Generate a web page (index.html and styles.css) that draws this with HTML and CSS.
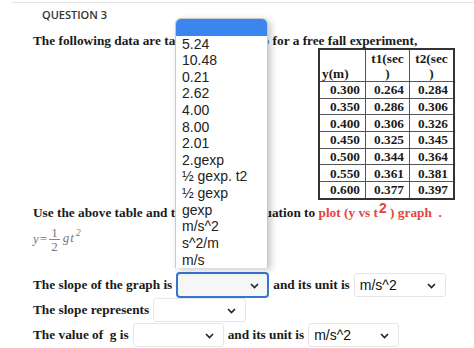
FILE: index.html
```html
<!DOCTYPE html>
<html lang="en">
<head>
	<meta charset="UTF-8">
	<title>Question 3</title>
	<link rel="stylesheet" href="styles.css">
</head>
<body>
	<div class="page">
		<div class="rule"></div>
		<div class="qtitle">QUESTION 3</div>
		<div class="qbody">
			<p class="lead">The following data are taken from the lab for a free fall experiment,</p>
			<table class="data">
				<tr class="head">
					<td class="ym">y(m)</td>
					<td>t1(sec<br>)</td>
					<td>t2(sec<br>)</td>
				</tr>
				<tr><td>0.300</td><td>0.264</td><td>0.284</td></tr>
				<tr><td>0.350</td><td>0.286</td><td>0.306</td></tr>
				<tr><td>0.400</td><td>0.306</td><td>0.326</td></tr>
				<tr><td>0.450</td><td>0.325</td><td>0.345</td></tr>
				<tr><td>0.500</td><td>0.344</td><td>0.364</td></tr>
				<tr><td>0.550</td><td>0.361</td><td>0.381</td></tr>
				<tr><td>0.600</td><td>0.377</td><td>0.397</td></tr>
			</table>
			<p class="use">Use the above table and the kinematic equation to <span class="red">plot (y vs t<span class="sq">2</span> ) graph &nbsp;.</span></p>
			<div class="formula">
				<span>y</span><span class="eq">=</span>
				<span class="frac"><span class="num">1</span><span class="den">2</span></span>
				<span class="g">gt<sup>2</sup></span>
			</div>

			<div class="row">
				<span>The slope of the graph is</span>
				<div class="sel focus w93"><span class="val"></span>
					<svg class="chev" width="9" height="6" viewBox="0 0 9 6"><path d="M1 1l3.5 3.5L8 1" fill="none" stroke="#222" stroke-width="1.6"/></svg>
				</div>
				<span>and its unit is</span>
				<div class="sel w92"><span class="val">m/s^2</span>
					<svg class="chev" width="9" height="6" viewBox="0 0 9 6"><path d="M1 1l3.5 3.5L8 1" fill="none" stroke="#222" stroke-width="1.6"/></svg>
				</div>
			</div>
			<div class="row">
				<span>The slope represents</span>
				<div class="sel w93"><span class="val"></span>
					<svg class="chev" width="9" height="6" viewBox="0 0 9 6"><path d="M1 1l3.5 3.5L8 1" fill="none" stroke="#222" stroke-width="1.6"/></svg>
				</div>
			</div>
			<div class="row">
				<span>The value of &nbsp;g is</span>
				<div class="sel w91"><span class="val"></span>
					<svg class="chev" width="9" height="6" viewBox="0 0 9 6"><path d="M1 1l3.5 3.5L8 1" fill="none" stroke="#222" stroke-width="1.6"/></svg>
				</div>
				<span>and its unit is</span>
				<div class="sel w91"><span class="val">m/s^2</span>
					<svg class="chev" width="9" height="6" viewBox="0 0 9 6"><path d="M1 1l3.5 3.5L8 1" fill="none" stroke="#222" stroke-width="1.6"/></svg>
				</div>
			</div>
		</div>

		<!-- open list of the first select -->
		<ul class="popup">
			<li class="active"></li>
			<li>5.24</li>
			<li>10.48</li>
			<li>0.21</li>
			<li>2.62</li>
			<li>4.00</li>
			<li>8.00</li>
			<li>2.01</li>
			<li>2.gexp</li>
			<li>½ gexp. t2</li>
			<li>½ gexp</li>
			<li>gexp</li>
			<li>m/s^2</li>
			<li>s^2/m</li>
			<li>m/s</li>
		</ul>
	</div>
</body>
</html>
```

FILE: styles.css
```css
*{
	margin: 0;
	padding: 0;
	list-style-type: none;
}
body{
	background: #fff;
}
.page{
	position: relative;
	width: 474px;
	height: 348px;
	overflow: hidden;
	padding-top: 2px;
	box-sizing: border-box;
}
.rule{
	margin-left: 12px;
	border-top: 1px solid #e4e4e4;
}
.qtitle{
	margin-top: 4px;
	padding-left: 42px;
	font-family: "Open Sans", "Liberation Sans", sans-serif;
	font-weight: 600;
	font-size: 11px;
	line-height: 16px;
	color: #333;
}
.qbody{
	padding-left: 33px;
	font-family: "Liberation Serif", serif;
	font-weight: bold;
	font-size: 13.3px;
	color: #1a1a1a;
}
.lead{
	margin-top: 10px;
	line-height: 15px;
	white-space: nowrap;
}
.data{
	margin-left: 285px;
	border-collapse: collapse;
	border: 2px solid #333;
}
.data td{
	border: 1px solid #555;
	height: 15.7px;
	line-height: 15px;
	padding: 0 5px 0 2px;
	text-align: right;
}
.data tr td:nth-child(1){
	width: 38px;
}
.data tr td:nth-child(2){
	width: 36px;
}
.data tr td:nth-child(3){
	width: 36px;
}
.data .head td{
	height: 31px;
	text-align: center;
	vertical-align: bottom;
	padding: 0 2px;
}
.data .head .ym{
	text-align: left;
}
.use{
	margin-top: 4px;
	line-height: 16px;
	white-space: nowrap;
}
.red{
	color: #e2453b;
}
.red .sq{
	font-family: "Liberation Sans", sans-serif;
	font-size: 14px;
	position: relative;
	top: -4px;
	margin-left: 1px;
}
.formula{
	display: flex;
	align-items: center;
	height: 32px;
	margin-top: 2px;
	font-family: "Liberation Serif", serif;
	font-style: italic;
	font-weight: normal;
	font-size: 13px;
	color: #777;
}
.formula .eq{
	font-style: normal;
	margin: 0 2px 0 1px;
}
.frac{
	display: inline-flex;
	flex-direction: column;
	align-items: center;
	font-style: normal;
	line-height: 11px;
	margin-right: 3px;
	margin-top: 1px;
}
.frac .num{
	border-bottom: 1px solid #888;
	padding: 0 2px 1px;
}
.frac .den{
	padding-top: 1px;
}
.formula .g{
	margin-top: -2px;
	letter-spacing: 1px;
}
.formula sup{
	font-size: 10px;
	line-height: 0;
	margin-left: 1px;
}
.row{
	display: flex;
	align-items: center;
	gap: 4px;
	height: 25px;
	white-space: nowrap;
}
.formula + .row{
	margin-top: 18px;
}
.row span{
	margin-top: -1px;
}
.sel{
	position: relative;
	box-sizing: border-box;
	height: 24px;
	border: 1px solid #e6e6e6;
	border-radius: 3px;
	background: #fff;
	display: flex;
	align-items: center;
	padding: 0 9px 0 5px;
	font-family: "Liberation Sans", sans-serif;
	font-weight: normal;
	font-size: 14px;
	color: #111;
}
.sel .val{
	flex: 1;
	margin-top: 0;
}
.sel .chev{
	flex: none;
	margin-top: 1px;
}
.sel.focus{
	height: 26px;
	border: 2px solid #3574d1;
	border-radius: 4px;
	background: #f6f6f6;
	padding-right: 8px;
}
.w93{
	width: 93px;
}
.w92{
	width: 92px;
}
.w91{
	width: 91px;
}
.popup{
	position: absolute;
	left: 175px;
	top: 18px;
	width: 93px;
	box-sizing: border-box;
	border: 1px solid #c9c9c9;
	border-bottom: none;
	border-radius: 6px 6px 0 0;
	overflow: hidden;
	background: #fff;
	box-shadow: 3px 2px 7px rgba(0,0,0,0.22);
	font-family: "Liberation Sans", sans-serif;
	font-size: 14px;
	color: #222;
}
.popup li{
	height: 16.62px;
	line-height: 16.62px;
	padding-left: 6px;
	white-space: nowrap;
}
.popup .active{
	background: #3a86ee;
}
```
